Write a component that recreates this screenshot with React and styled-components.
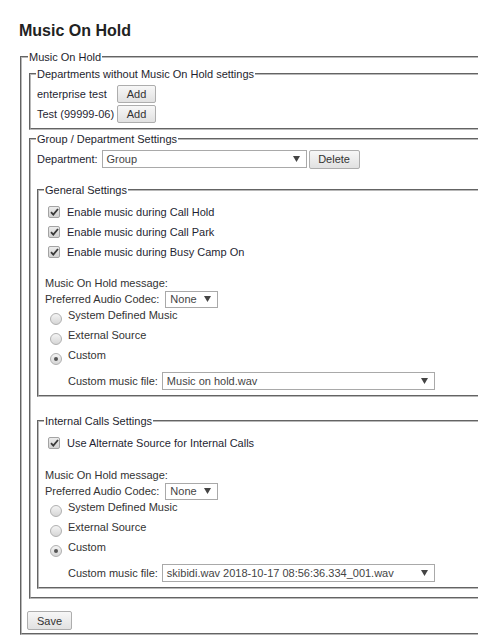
import React from 'react';
import styled, { createGlobalStyle } from 'styled-components';

const GlobalStyle = createGlobalStyle`
  body {
    margin: 0;
    background: #ffffff;
    font-family: "Liberation Sans", Arial, sans-serif;
    font-size: 11px;
    line-height: 14px;
    color: #222222;
  }
`;

const Page = styled.div`
  width: 478px;
  overflow: hidden;
  padding-top: 21px;
  padding-bottom: 4px;
`;

const Title = styled.h2`
  margin: 0 0 9px 19px;
  font-size: 16px;
  line-height: 20px;
  font-weight: bold;
  color: #222222;
`;

const Fieldset = styled.fieldset`
  margin: ${p => p.$margin || '0'};
  padding: ${p => p.$pad || '3px 6px 4px 6px'};
  border: 2px groove #b8b8b8;
  min-width: 0;
  width: ${p => p.$width || 'auto'};
  box-sizing: border-box;
`;

const Legend = styled.legend`
  padding: 0 1px;
  margin-left: -1px;
  font-size: 11px;
  line-height: 14px;
  color: #1e1e2e;
`;

const DeptGrid = styled.div`
  display: grid;
  grid-template-columns: auto 1fr;
  grid-auto-rows: 20px;
  column-gap: 3px;
  align-items: center;
  justify-items: start;
`;

const Text = styled.span`
  color: ${p => p.$muted ? '#333333' : '#1f1f33'};
  white-space: nowrap;
`;

const Button = styled.button`
  box-sizing: border-box;
  height: ${p => p.$h || 18}px;
  width: ${p => p.$w}px;
  margin: ${p => p.$margin || '0'};
  padding: 0;
  border: 1px solid #adadad;
  border-radius: 2px;
  background: linear-gradient(#f7f7f7, #e1e1e1);
  font-family: "Liberation Sans", Arial, sans-serif;
  font-size: 11px;
  color: #333333;
`;

const Row = styled.div`
  display: flex;
  align-items: center;
  height: ${p => p.$h || 20}px;
`;

const Select = styled.div`
  box-sizing: border-box;
  display: flex;
  align-items: center;
  justify-content: space-between;
  width: ${p => p.$w}px;
  height: ${p => p.$h || 18}px;
  margin-left: ${p => p.$ml || 0}px;
  padding: 0 6px 0 4px;
  border: 1px solid #a9a9a9;
  background: #ffffff;
  color: #444444;
  white-space: nowrap;
`;

const Arrow = styled.svg`
  flex: none;
  width: 7px;
  height: 6px;
`;

const CheckRow = styled.div`
  display: flex;
  align-items: center;
  height: 20px;
  padding-left: 3px;
  gap: 7px;
`;

const CheckBox = styled.span`
  box-sizing: border-box;
  display: flex;
  align-items: center;
  justify-content: center;
  width: 12px;
  height: 12px;
  border: 1px solid #a3a3a3;
  border-radius: 2px;
  background: linear-gradient(#ececec, #d2d2d2);
`;

const Message = styled.div`
  margin-top: ${p => p.$mt}px;
  color: #333333;
`;

const RadioRow = styled.div`
  display: flex;
  align-items: flex-start;
  height: 20px;
  padding-left: 5px;
  gap: 6px;
`;

const Radio = styled.span`
  box-sizing: border-box;
  display: flex;
  align-items: center;
  justify-content: center;
  margin-top: 5px;
  width: 12px;
  height: 12px;
  border: 1px solid #b0b0b0;
  border-radius: 50%;
  background: linear-gradient(#f4f4f4, #d6d6d6);

  &::after {
    content: '';
    display: ${p => p.$on ? 'block' : 'none'};
    width: 4px;
    height: 4px;
    border-radius: 50%;
    background: #555555;
  }
`;

const FileRow = styled.div`
  display: flex;
  align-items: center;
  height: 18px;
  margin-top: 4px;
  padding-left: 23px;
  gap: 4px;
  color: #333333;
`;

const DropArrow = () => (
  <Arrow viewBox="0 0 7 6">
    <path d="M0 0h7L3.5 6z" fill="#444444" />
  </Arrow>
);

const Check = () => (
  <CheckBox>
    <svg width="9" height="8" viewBox="0 0 9 8">
      <path d="M1 4.2l2.3 2.4L8 1" fill="none" stroke="#3a3a3a" strokeWidth="1.8" />
    </svg>
  </CheckBox>
);

const MusicSource = ({ file }) => (
  <>
    <Row $h={18}>
      <Text $muted>Preferred Audio Codec:</Text>
      <Select $w={53} $h={17} $ml={6}>None<DropArrow /></Select>
    </Row>
    {['System Defined Music', 'External Source', 'Custom'].map((label, i) => (
      <RadioRow key={label}>
        <Radio $on={i === 2} />
        <Text $muted>{label}</Text>
      </RadioRow>
    ))}
    <FileRow>
      <span>Custom music file:</span>
      <Select $w={273}>{file}<DropArrow /></Select>
    </FileRow>
  </>
);

const departments = ['enterprise test', 'Test (99999-06)'];

const generalOptions = [
  'Enable music during Call Hold',
  'Enable music during Call Park',
  'Enable music during Busy Camp On'
];

export default function App() {
  return (
    <Page>
      <GlobalStyle />
      <Title>Music On Hold</Title>
      <Fieldset $margin="0 0 0 20px" $width="620px" $pad="3px 6px 3px 7px">
        <Legend>Music On Hold</Legend>

        <Fieldset>
          <Legend>Departments without Music On Hold settings</Legend>
          <DeptGrid>
            {departments.map(name => (
              <React.Fragment key={name}>
                <Text>{name}</Text>
                <Button $w={39}>Add</Button>
              </React.Fragment>
            ))}
          </DeptGrid>
        </Fieldset>

        <Fieldset $margin="2px 0 0" $pad="3px 6px 8px 6px">
          <Legend>Group / Department Settings</Legend>
          <Row>
            <Text>Department:</Text>
            <Select $w={205} $ml={4}>Group<DropArrow /></Select>
            <Button $w={51} $h={19} $margin="0 0 0 2px">Delete</Button>
          </Row>

          <Fieldset $margin="14px 0 0" $pad="5px 6px 5px 6px">
            <Legend>General Settings</Legend>
            {generalOptions.map(label => (
              <CheckRow key={label}>
                <Check />
                <Text>{label}</Text>
              </CheckRow>
            ))}
            <Message $mt={14}>Music On Hold message:</Message>
            <MusicSource file="Music on hold.wav" />
          </Fieldset>

          <Fieldset $margin="17px 0 0" $pad="5px 6px 5px 6px">
            <Legend>Internal Calls Settings</Legend>
            <CheckRow>
              <Check />
              <Text>Use Alternate Source for Internal Calls</Text>
            </CheckRow>
            <Message $mt={15}>Music On Hold message:</Message>
            <MusicSource file="skibidi.wav 2018-10-17 08:56:36.334_001.wav" />
          </Fieldset>
        </Fieldset>

        <Button $w={45} $h={19} $margin="12px 0 0 -2px">Save</Button>
      </Fieldset>
    </Page>
  );
}
